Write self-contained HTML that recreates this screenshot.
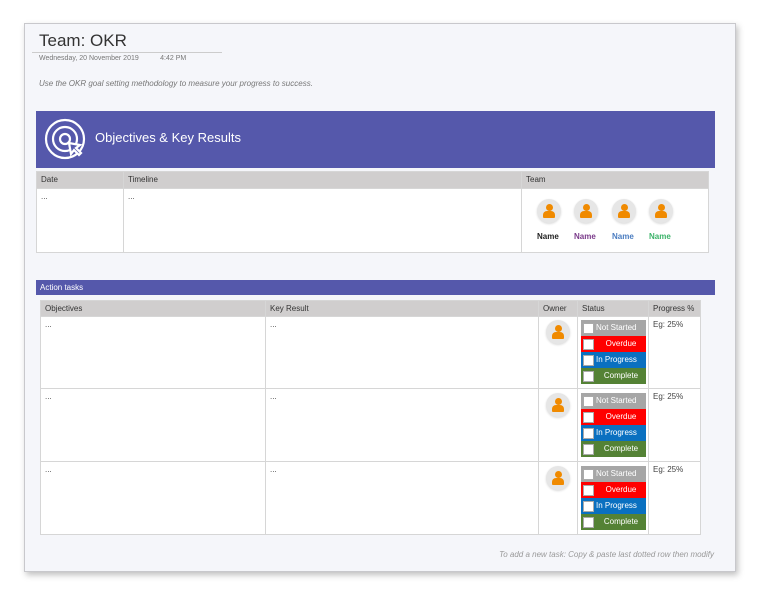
<!DOCTYPE html><html><head><style>
body{margin:0;width:768px;height:604px;background:#fff;font-family:"Liberation Sans",sans-serif;position:relative;overflow:hidden}
.card{position:absolute;left:24px;top:23px;width:710px;height:547px;background:#f5f6fa;border:1px solid #c8c8cc;box-shadow:2px 3px 6px rgba(0,0,0,.25)}
.a{position:absolute}
.c{position:absolute;box-sizing:border-box;border:1px solid #d6d6d6;background:#fff;font-size:8px;color:#444;padding:3px 4px;line-height:10px;white-space:nowrap}
.h{background:#d0cece;color:#333}
.av{position:absolute;width:24px;height:24px;border-radius:50%;background:#e6e6e6;box-shadow:0 1px 2px rgba(0,0,0,.15)}
.av:before{content:"";position:absolute;left:9px;top:5px;width:7px;height:7px;border-radius:50%;background:#f08a00}
.av:after{content:"";position:absolute;left:6px;top:12px;width:12px;height:7px;border-radius:4px 4px 1px 1px;background:#f08a00}
.st div{height:16px;font-size:8px;color:#fff;line-height:16px;position:relative;padding-left:15px;white-space:nowrap}
.st div:before{content:"";position:absolute;left:2px;top:3px;width:9px;height:9px;background:#fff;border:1px solid #aaa}
</style></head><body>
<div class="card"></div>
<div class="a" style="left:39px;top:31px;font-size:17px;color:#333">Team: OKR</div>
<div class="a" style="left:32px;top:52px;width:190px;border-top:1px solid #ccc"></div>
<div class="a" style="left:39px;top:55px;font-size:7px;color:#777">Wednesday, 20 November 2019 &nbsp;&nbsp;&nbsp;&nbsp;&nbsp;&nbsp;&nbsp;&nbsp;&nbsp;&nbsp;4:42 PM</div>
<div class="a" style="left:39px;top:79px;font-size:8px;color:#777;font-style:italic">Use the OKR goal setting methodology to measure your progress to success.</div>
<div class="a" style="left:36px;top:111px;width:679px;height:57px;background:#5558ab"></div>
<svg class="a" style="left:44px;top:117px" width="44" height="44" viewBox="0 0 44 44" fill="none" stroke="#fff" stroke-width="2.2"><circle cx="21" cy="22" r="19"/><circle cx="21" cy="22" r="12"/><circle cx="21" cy="22" r="5"/><path d="M25 26 L27 37 L30 33 L35 38 L37 36 L32 31 L36 28 Z" fill="#5558ab"/></svg>
<div class="a" style="left:95px;top:130px;font-size:13px;color:#fff">Objectives &amp; Key Results</div>

<div class="c h" style="left:36px;top:171px;width:88px;height:18px">Date</div>
<div class="c h" style="left:123px;top:171px;width:399px;height:18px">Timeline</div>
<div class="c h" style="left:521px;top:171px;width:188px;height:18px">Team</div>
<div class="c" style="left:36px;top:188px;width:88px;height:65px">...</div>
<div class="c" style="left:123px;top:188px;width:399px;height:65px">...</div>
<div class="c" style="left:521px;top:188px;width:188px;height:65px"></div>

<div class="av" style="left:537px;top:199px"></div><div class="av" style="left:574px;top:199px"></div><div class="av" style="left:612px;top:199px"></div><div class="av" style="left:649px;top:199px"></div>
<div class="a" style="top:232px;left:537px;font-size:8px;font-weight:bold;color:#222">Name</div>
<div class="a" style="top:232px;left:574px;font-size:8px;font-weight:bold;color:#7a3a8a">Name</div>
<div class="a" style="top:232px;left:612px;font-size:8px;font-weight:bold;color:#4a7cc0">Name</div>
<div class="a" style="top:232px;left:649px;font-size:8px;font-weight:bold;color:#3cb36a">Name</div>
<div class="a" style="left:36px;top:280px;width:679px;height:15px;background:#5558ab;color:#fff;font-size:8px;line-height:15px;text-indent:4px">Action tasks</div>

<div class="c h" style="left:40px;top:300px;width:226px;height:17px">Objectives</div>
<div class="c h" style="left:265px;top:300px;width:274px;height:17px">Key Result</div>
<div class="c h" style="left:538px;top:300px;width:40px;height:17px">Owner</div>
<div class="c h" style="left:577px;top:300px;width:72px;height:17px">Status</div>
<div class="c h" style="left:648px;top:300px;width:53px;height:17px">Progress %</div>

<div class="c" style="left:40px;top:316px;width:226px;height:73px">...</div>
<div class="c" style="left:265px;top:316px;width:274px;height:73px">...</div>
<div class="c" style="left:538px;top:316px;width:40px;height:73px"></div>
<div class="c" style="left:577px;top:316px;width:72px;height:73px"></div>
<div class="c" style="left:648px;top:316px;width:53px;height:73px">Eg: 25%</div>

<div class="c" style="left:40px;top:388px;width:226px;height:74px">...</div>
<div class="c" style="left:265px;top:388px;width:274px;height:74px">...</div>
<div class="c" style="left:538px;top:388px;width:40px;height:74px"></div>
<div class="c" style="left:577px;top:388px;width:72px;height:74px"></div>
<div class="c" style="left:648px;top:388px;width:53px;height:74px">Eg: 25%</div>

<div class="c" style="left:40px;top:461px;width:226px;height:74px">...</div>
<div class="c" style="left:265px;top:461px;width:274px;height:74px">...</div>
<div class="c" style="left:538px;top:461px;width:40px;height:74px"></div>
<div class="c" style="left:577px;top:461px;width:72px;height:74px"></div>
<div class="c" style="left:648px;top:461px;width:53px;height:74px">Eg: 25%</div>

<div class="av" style="left:546px;top:320px"></div><div class="av" style="left:546px;top:393px"></div><div class="av" style="left:546px;top:466px"></div>
<div class="a st" style="left:581px;top:320px;width:65px"><div style="background:#a6a6a6">Not Started</div><div style="background:#f00;text-align:center">Overdue</div><div style="background:#0a70c0">In Progress</div><div style="background:#548235;text-align:center">Complete</div></div>
<div class="a st" style="left:581px;top:393px;width:65px"><div style="background:#a6a6a6">Not Started</div><div style="background:#f00;text-align:center">Overdue</div><div style="background:#0a70c0">In Progress</div><div style="background:#548235;text-align:center">Complete</div></div>
<div class="a st" style="left:581px;top:466px;width:65px"><div style="background:#a6a6a6">Not Started</div><div style="background:#f00;text-align:center">Overdue</div><div style="background:#0a70c0">In Progress</div><div style="background:#548235;text-align:center">Complete</div></div>
<div class="a" style="right:54px;top:550px;font-size:8px;color:#999;font-style:italic">To add a new task: Copy &amp; paste last dotted row then modify</div>
</body></html>
